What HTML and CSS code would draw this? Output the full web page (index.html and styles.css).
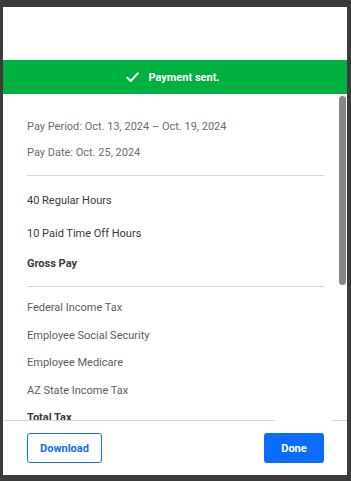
FILE: index.html
```html
<!DOCTYPE html>
<html>
<head>
<meta charset="utf-8">
<link rel="stylesheet" href="styles.css">
</head>
<body>
<div class="modal">
  <div class="header"></div>
  <div class="banner">
    <svg class="check" width="13" height="11" viewBox="0 0 13 11"><path d="M1.2 5.6 L4.7 9 L11.8 1.4" fill="none" stroke="#fff" stroke-width="2" stroke-linecap="round" stroke-linejoin="round"/></svg>
    <span>Payment sent.</span>
  </div>
  <div class="body">
    <div class="content">
      <p class="meta first">Pay Period: Oct. 13, 2024 – Oct. 19, 2024</p>
      <p class="meta second">Pay Date: Oct. 25, 2024</p>
      <hr class="rule r1">
      <p class="row hours1">40 Regular Hours</p>
      <p class="row hours2">10 Paid Time Off Hours</p>
      <p class="row bold gross">Gross Pay</p>
      <hr class="rule r2">
      <p class="row tax t1">Federal Income Tax</p>
      <p class="row tax">Employee Social Security</p>
      <p class="row tax">Employee Medicare</p>
      <p class="row tax">AZ State Income Tax</p>
      <p class="row bold tax">Total Tax</p>
    </div>
    <div class="thumb"></div>
  </div>
  <div class="footer">
    <button class="btn outline">Download</button>
    <button class="btn primary">Done</button>
  </div>
</div>
</body>
</html>
```
FILE: styles.css
```css
html, body {
  margin: 0;
  padding: 0;
  background: #3b3b3b;
  height: 481px;
  overflow: hidden;
}
body {
  font-family: Roboto, "Liberation Sans", sans-serif;
  padding: 7px 4px 6px 3px;
  box-sizing: border-box;
}
.modal {
  background: #fff;
  height: 468px;
  display: flex;
  flex-direction: column;
}
.header {
  height: 53px;
  flex: none;
}
.banner {
  height: 34px;
  flex: none;
  background: #00b140;
  color: #fff;
  display: flex;
  align-items: center;
  justify-content: center;
  gap: 9px;
  font-size: 11px;
  font-weight: 700;
  padding-right: 4px;
}
.check { display: block; }
.body {
  flex: 1;
  position: relative;
  overflow: hidden;
}
.content {
  padding: 25px 23px 0 24px;
}
p {
  margin: 0;
  font-size: 11px;
  line-height: 16px;
}
.meta { color: #6b6c72; }
.second { margin-top: 10px; }
.rule {
  border: 0;
  border-top: 1px solid #d4d7dc;
  margin: 0;
}
.r1 { margin-top: 14px; }
.row { color: #393a3d; }
.hours1 { margin-top: 17px; }
.hours2 { margin-top: 17px; }
.gross { margin-top: 14px; }
.r2 { margin-top: 14px; }
.bold { font-weight: 700; }
.tax { margin-top: 11.5px; color: #5c5d63; }
.tax.bold { color: #393a3d; }
.t1 { margin-top: 13px; }
.thumb {
  position: absolute;
  right: 1px;
  top: 2px;
  width: 7px;
  height: 189px;
  border-radius: 4px;
  background: #858585;
}
.footer {
  flex: none;
  box-sizing: border-box;
  height: 55px;
  background-image: linear-gradient(to right, #d4d7dc 0, #d4d7dc 272px, transparent 272px, transparent 328px, #d4d7dc 328px);
  background-size: 100% 1px;
  background-repeat: no-repeat;
  display: flex;
  justify-content: space-between;
  align-items: flex-start;
  padding: 13px 23px 0 24px;
}
.btn {
  font-family: inherit;
  font-size: 11px;
  font-weight: 700;
  height: 30px;
  border-radius: 3px;
  cursor: pointer;
  padding: 0;
}
.outline {
  width: 75px;
  background: #fff;
  color: #0d6efd;
  border: 1px solid #0d6efd;
}
.primary {
  width: 60px;
  background: #0b6cff;
  color: #fff;
  border: 0;
}
```
